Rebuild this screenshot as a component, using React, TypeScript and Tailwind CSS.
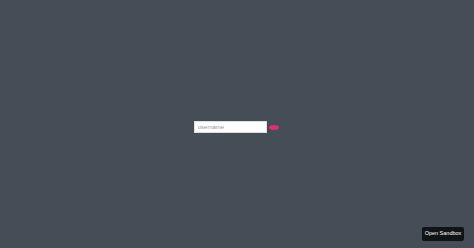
export default function App() {
  return (
    <div className="relative w-[474px] h-[248px] bg-[#454d57] font-['Liberation_Sans',Arial,sans-serif]">
      <div className="flex items-center justify-center h-full pt-[6px] pr-[2px]">
        <div className="flex items-center gap-[2px]">
          <input
            placeholder="username"
            className="w-[73px] h-[12px] bg-white border border-[#ddd] px-[3px] text-[6px] text-gray-700 placeholder:text-[#999] outline-none"
          />
          <span className="block w-[10px] h-[5px] rounded-[50%] bg-[#e0306a]" />
        </div>
      </div>
      <button className="absolute right-[10px] bottom-[7px] w-[42px] h-[14px] flex items-center justify-center bg-[#111317] rounded-[2px] text-white text-[5.5px] leading-none whitespace-nowrap">
        Open Sandbox
      </button>
    </div>
  );
}
